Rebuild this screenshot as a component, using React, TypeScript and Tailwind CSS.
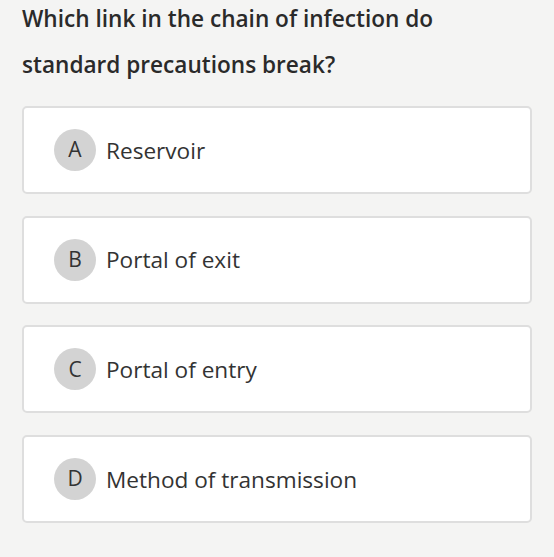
export default function App() {
  const options = [
    { key: "A", label: "Reservoir" },
    { key: "B", label: "Portal of exit" },
    { key: "C", label: "Portal of entry" },
    { key: "D", label: "Method of transmission" },
  ];

  return (
    <div
      className="h-[557px] w-[554px] overflow-hidden bg-[#f4f4f3] px-[22px]"
      style={{ fontFamily: '"Open Sans", sans-serif' }}
    >
      <h1 className="-mt-[4px] text-[22.6px] font-semibold leading-[46px] text-[#2a2a2a]">
        Which link in the chain of infection do
        <br />
        standard precautions break?
      </h1>
      <div className="mt-[18px] flex w-[510px] flex-col gap-[21.7px]">
        {options.map((o) => (
          <div
            key={o.key}
            className="flex h-[88px] items-center gap-[10px] rounded-[5px] border-2 border-[#dedede] bg-white pl-[30px]"
          >
            <span className="flex h-[42px] w-[42px] items-center justify-center rounded-full bg-[#d3d3d3] text-[21px] text-[#333]">
              {o.key}
            </span>
            <span className="pt-[1px] text-[22.6px] text-[#333]">{o.label}</span>
          </div>
        ))}
      </div>
    </div>
  );
}
